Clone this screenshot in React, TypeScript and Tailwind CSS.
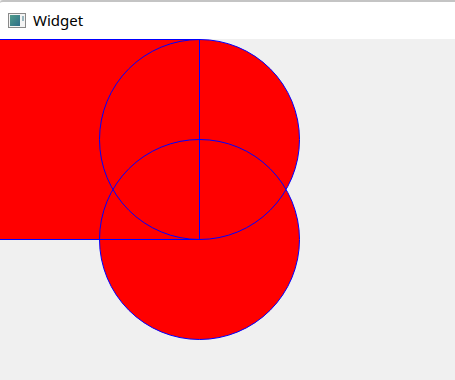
const WindowIcon = () => (
  <svg width="18" height="15" viewBox="0 0 18 15" className="shrink-0">
    <rect x="0.5" y="0.5" width="17" height="14" fill="#f4f4f4" stroke="#8a8a8a" />
    <defs>
      <linearGradient id="wg" x1="0" y1="0" x2="1" y2="1">
        <stop offset="0" stopColor="#4f9c8a" />
        <stop offset="1" stopColor="#2f6f8a" />
      </linearGradient>
    </defs>
    <rect x="2" y="2" width="10" height="11" fill="url(#wg)" />
    <rect x="14" y="3" width="2" height="5" fill="#9bb8c0" />
  </svg>
);

const Canvas = () => (
  <svg width="455" height="341" className="block">
    <g fill="#ff0000" stroke="none">
      <rect x="-1" y="0" width="201" height="201" />
      <circle cx="199.5" cy="100.5" r="100" />
      <circle cx="199.5" cy="200.5" r="100" />
    </g>
    <g fill="none" stroke="#0000ff" strokeWidth="1">
      <rect x="-1.5" y="0.5" width="201" height="200" shapeRendering="crispEdges" />
      <circle cx="199.5" cy="100.5" r="100" />
      <circle cx="199.5" cy="200.5" r="100" />
    </g>
  </svg>
);

export default function App() {
  return (
    <div className="w-[455px] h-[380px] flex flex-col bg-[#f0f0f0] overflow-hidden font-['Segoe_UI','Noto_Sans',sans-serif]">
      <div className="h-[39px] shrink-0 bg-white border-t-2 border-[#c4c4c4] rounded-tl-[3px] flex items-center gap-[7px] pl-[8px]">
        <WindowIcon />
        <span className="text-[15px] text-black leading-none pb-[1px]">Widget</span>
      </div>
      <div className="flex-1">
        <Canvas />
      </div>
    </div>
  );
}
